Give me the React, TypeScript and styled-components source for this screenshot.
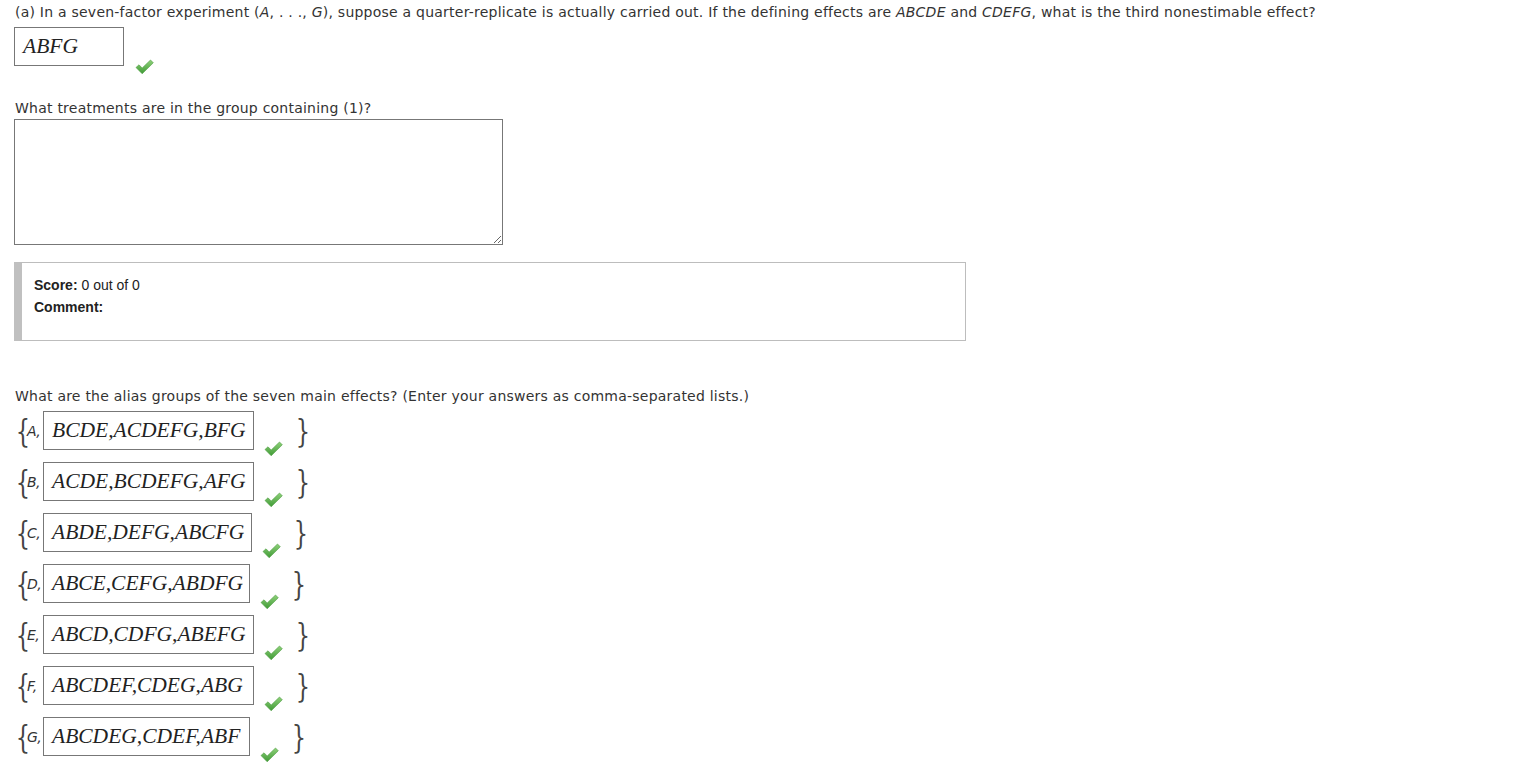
import React from "react";
import styled, { createGlobalStyle } from "styled-components";

const Global = createGlobalStyle`
  html, body { margin: 0; padding: 0; background: #fff; }
  body { font-family: "DejaVu Sans", Verdana, sans-serif; font-size: 14px; color: #333; }
`;

const Page = styled.div`
  padding: 4px 14px 20px 14px;
  display: flex;
  flex-direction: column;
  align-items: flex-start;
`;

const Prompt = styled.p<{ $top?: number }>`
  margin: ${(p) => p.$top ?? 0}px 0 0 1px;
  line-height: 17px;
  font-size: 14px;
  color: #333;
  letter-spacing: 0.23px;
  white-space: nowrap;
`;

const Em = styled.i`
  font-style: italic;
`;

const AnswerLine = styled.div<{ $top?: number }>`
  display: flex;
  align-items: flex-start;
  height: 39px;
  margin-top: ${(p) => p.$top ?? 0}px;
`;

const AnswerBox = styled.div<{ $w?: number }>`
  box-sizing: border-box;
  height: 39px;
  flex: none;
  ${(p) => (p.$w ? `width: ${p.$w}px;` : "")}
  border: 1px solid #777;
  padding: 0 8px;
  display: flex;
  align-items: center;
  font-family: "Liberation Serif", "Times New Roman", serif;
  font-style: italic;
  font-size: 21.5px;
  color: #222;
  white-space: nowrap;
`;

const CheckWrap = styled.span<{ $dx: number; $dy: number }>`
  display: inline-flex;
  flex: none;
  margin-left: ${(p) => p.$dx}px;
  margin-top: ${(p) => p.$dy}px;
`;

const TextArea = styled.textarea`
  box-sizing: border-box;
  width: 489px;
  height: 126px;
  margin-top: 2px;
  border: 1px solid #777;
  font-family: "DejaVu Sans", sans-serif;
  font-size: 13px;
  resize: both;
  display: block;
`;

const ScoreBox = styled.div`
  box-sizing: border-box;
  width: 952px;
  height: 79px;
  margin-top: 17px;
  border: 1px solid #bdbdbd;
  border-left: 8px solid #c0c0c0;
  padding: 14px 12px 0 12px;
  font-family: "Liberation Sans", Arial, sans-serif;
  font-size: 14px;
  color: #222;
`;

const ScoreLine = styled.div`
  line-height: 17px;
  height: 22px;
`;

const Bold = styled.b`
  font-weight: bold;
`;

const Rows = styled.div`
  display: flex;
  flex-direction: column;
  gap: 12px;
  margin-top: 6px;
`;

const Row = styled.div`
  display: flex;
  align-items: flex-start;
  height: 39px;
`;

const Brace = styled.span`
  font-family: "DejaVu Serif", "Liberation Serif", serif;
  font-size: 30px;
  line-height: 39px;
  height: 39px;
  color: #444;
  transform: scaleX(0.75) scaleY(1.05);
  display: inline-block;
  width: 13px;
  flex: none;
  text-align: center;
  font-weight: 200;
`;

const OpenBrace = styled(Brace)`
  margin-left: 0px;
`;

const CloseBrace = styled(Brace)`
  margin-left: 11px;
`;

const Label = styled.span`
  font-family: "DejaVu Sans", Verdana, sans-serif;
  font-style: italic;
  font-size: 14px;
  color: #333;
  line-height: 39px;
  width: 16px;
  flex: none;
  margin-top: 1px;
  letter-spacing: -0.6px;
  white-space: nowrap;
`;

const Check = () => (
  <svg width="19" height="16" viewBox="0 0 19 16">
    <defs>
      <linearGradient id="ck" x1="0" y1="0" x2="0" y2="1">
        <stop offset="0" stopColor="#8fd17a" />
        <stop offset="1" stopColor="#3f9a35" />
      </linearGradient>
    </defs>
    <path
      d="M1 8.5 L4 5.8 L7.2 9 L15.5 1 L18.3 3.8 L7.2 14.8 Z"
      fill="url(#ck)"
      stroke="#4c9c40"
      strokeWidth="0.6"
      strokeLinejoin="round"
    />
  </svg>
);

const groups: { l: string; v: string; w: number }[] = [
  { l: "A", v: "BCDE,ACDEFG,BFG", w: 211 },
  { l: "B", v: "ACDE,BCDEFG,AFG", w: 211 },
  { l: "C", v: "ABDE,DEFG,ABCFG", w: 209 },
  { l: "D", v: "ABCE,CEFG,ABDFG", w: 207 },
  { l: "E", v: "ABCD,CDFG,ABEFG", w: 211 },
  { l: "F", v: "ABCDEF,CDEG,ABG", w: 211 },
  { l: "G", v: "ABCDEG,CDEF,ABF", w: 207 },
];

export default function App() {
  return (
    <>
      <Global />
      <Page>
        <Prompt>
          (a) In a seven-factor experiment (<Em>A</Em>, . . ., <Em>G</Em>), suppose a quarter-replicate is
          actually carried out. If the defining effects are <Em>ABCDE</Em> and <Em>CDEFG</Em>, what is the third
          nonestimable effect?
        </Prompt>
        <AnswerLine $top={6}>
          <AnswerBox $w={110}>ABFG</AnswerBox>
          <CheckWrap $dx={11} $dy={32}>
            <Check />
          </CheckWrap>
        </AnswerLine>
        <Prompt $top={34}>What treatments are in the group containing (1)?</Prompt>
        <TextArea />
        <ScoreBox>
          <ScoreLine>
            <Bold>Score:</Bold> 0 out of 0
          </ScoreLine>
          <ScoreLine>
            <Bold>Comment:</Bold>
          </ScoreLine>
        </ScoreBox>
        <Prompt $top={47}>
          What are the alias groups of the seven main effects? (Enter your answers as comma-separated lists.)
        </Prompt>
        <Rows>
          {groups.map((g) => (
            <Row key={g.l}>
              <OpenBrace>{"{"}</OpenBrace>
              <Label>{g.l},</Label>
              <AnswerBox $w={g.w}>{g.v}</AnswerBox>
              <CheckWrap $dx={10} $dy={30}>
                <Check />
              </CheckWrap>
              <CloseBrace>{"}"}</CloseBrace>
            </Row>
          ))}
        </Rows>
      </Page>
    </>
  );
}
